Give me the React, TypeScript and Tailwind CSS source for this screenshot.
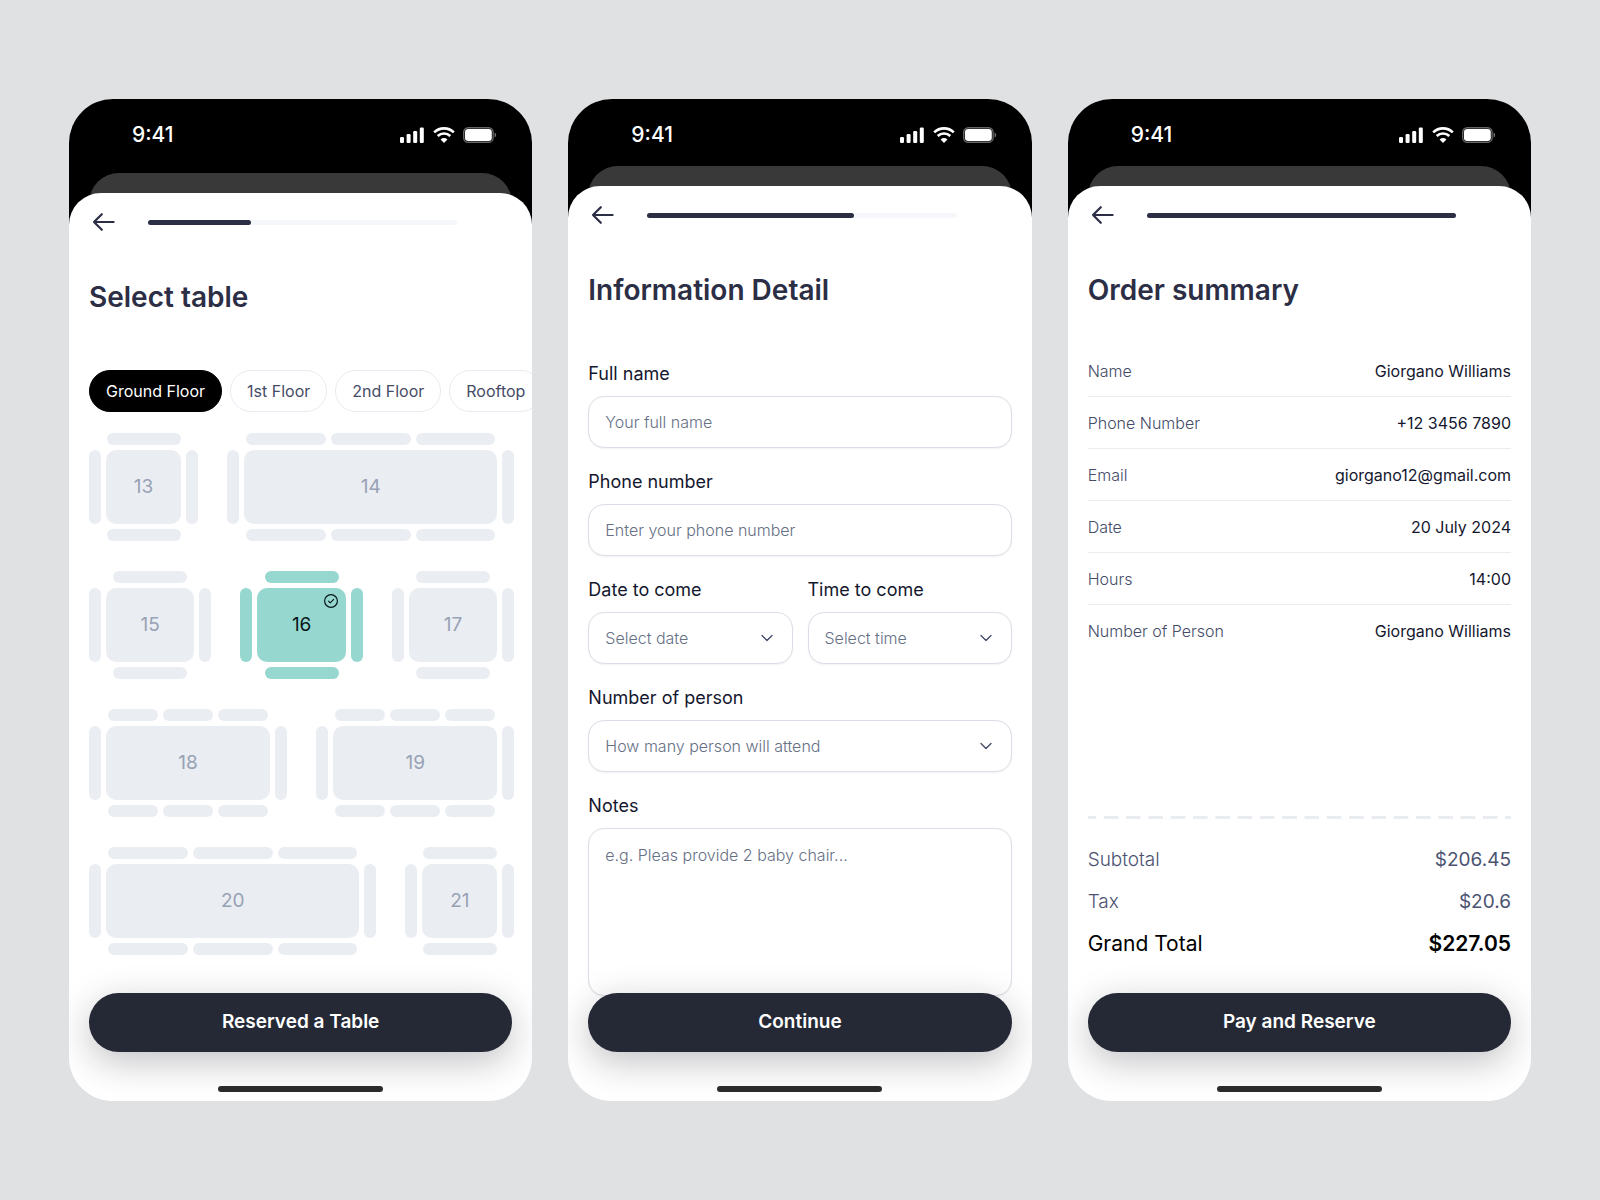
import { useState } from 'react';
import type { ReactNode } from 'react';
import { ChevronDown } from 'lucide-react';
import clsx from 'clsx';

type TableItem = {
  id: number;
  seats: 1 | 3;
  compact?: boolean;
};

const FLOORS = ['Ground Floor', '1st Floor', '2nd Floor', 'Rooftop'];

const TABLE_ROWS: TableItem[][] = [
  [
    { id: 13, seats: 1, compact: true },
    { id: 14, seats: 3 },
  ],
  [
    { id: 15, seats: 1 },
    { id: 16, seats: 1 },
    { id: 17, seats: 1 },
  ],
  [
    { id: 18, seats: 3 },
    { id: 19, seats: 3 },
  ],
  [
    { id: 20, seats: 3 },
    { id: 21, seats: 1, compact: true },
  ],
];

const SUMMARY = [
  { label: 'Name', value: 'Giorgano Williams' },
  { label: 'Phone Number', value: '+12 3456 7890' },
  { label: 'Email', value: 'giorgano12@gmail.com' },
  { label: 'Date', value: '20 July 2024' },
  { label: 'Hours', value: '14:00' },
  { label: 'Number of Person', value: 'Giorgano Williams' },
];

function StatusBar() {
  return (
    <div className="flex h-[67px] items-center justify-between pt-1 pr-[35px] pl-[63px] text-white">
      <span className="text-[21px] leading-7 font-medium">9:41</span>
      <div className="flex items-center gap-2">
        <svg width="25" height="16" viewBox="0 0 25 16" fill="currentColor" aria-hidden="true">
          <rect x="0" y="10" width="4" height="6" rx="1.2" />
          <rect x="6.6" y="7" width="4" height="9" rx="1.2" />
          <rect x="13.2" y="4" width="4" height="12" rx="1.2" />
          <rect x="19.8" y="0.5" width="4" height="15.5" rx="1.2" />
        </svg>
        <svg width="22" height="16" viewBox="0 0 22 16" fill="none" stroke="currentColor" aria-hidden="true">
          <path d="M1.2 5.4a14 14 0 0 1 19.6 0" strokeWidth="2.7" />
          <path d="M4.7 9a9 9 0 0 1 12.6 0" strokeWidth="2.6" />
          <path d="M11 15.9 7.6 12.4a4.9 4.9 0 0 1 6.8 0Z" fill="currentColor" stroke="none" />
        </svg>
        <svg width="34" height="16" viewBox="0 0 34 16" aria-hidden="true">
          <rect x="0.7" y="0.7" width="29.4" height="14.6" rx="4.6" fill="none" stroke="#fff" strokeOpacity="0.4" strokeWidth="1.4" />
          <rect x="2" y="2" width="26.8" height="12" rx="3.2" fill="#fff" />
          <path d="M31.6 5.4v5.2a2.9 2.9 0 0 0 0-5.2Z" fill="#fff" fillOpacity="0.45" />
        </svg>
      </div>
    </div>
  );
}

type PhoneProps = {
  title: string;
  step: number;
  action: string;
  lowered?: boolean;
  children: ReactNode;
};

function Phone({ title, step, action, lowered, children }: PhoneProps) {
  return (
    <section className="flex min-w-0 flex-1 flex-col overflow-hidden rounded-[44px] bg-white">
      <div className="bg-black">
        <StatusBar />
        <div className={clsx('px-5', lowered && 'pt-[7px]')}>
          <div className="h-[52px] rounded-t-[30px] bg-[#393939]" />
        </div>
      </div>

      <div className="relative -mt-8 flex flex-1 flex-col rounded-t-[32px] bg-white">
        <div className="flex h-[58px] items-center px-5">
          <button type="button" aria-label="Back" className="flex w-7 justify-center text-[#2b2e45]">
            <svg
              width="24"
              height="20"
              viewBox="0 0 24 20"
              fill="none"
              stroke="currentColor"
              strokeWidth="2.2"
              strokeLinecap="round"
              strokeLinejoin="round"
              aria-hidden="true"
            >
              <path d="M22.6 10H3M10.8 2.2 3 10l7.8 7.8" />
            </svg>
          </button>
          <div
            role="progressbar"
            aria-label="Reservation progress"
            aria-valuemin={0}
            aria-valuemax={3}
            aria-valuenow={step}
            className="mr-[55px] ml-[31px] h-[5px] flex-1 rounded-full bg-[#f6f7fa]"
          >
            <div className="h-full rounded-full bg-[#2b2e45]" style={{ width: `${(step / 3) * 100}%` }} />
          </div>
        </div>

        <h2 className="mt-[26px] px-5 text-[28px] leading-10 font-semibold text-[#2b2e45]">{title}</h2>

        <div className="flex flex-1 flex-col">{children}</div>

        <div className="relative flex flex-col items-center px-5 pb-[9px]">
          <button
            type="button"
            className="h-[59px] w-full rounded-full bg-[#252936] text-[19px] font-semibold text-white shadow-[0_10px_36px_rgba(20,20,30,0.26)]"
          >
            {action}
          </button>
          <div className="mt-[34px] h-[6px] w-[165px] rounded-full bg-[#2b2b2b]" />
        </div>
      </div>
    </section>
  );
}

function Seats({ count, color }: { count: number; color: string }) {
  if (count === 1) {
    return <span className={clsx('col-start-2 h-3 w-[74px] justify-self-center rounded-full', color)} />;
  }
  return (
    <span className="col-start-2 flex gap-[5px] px-[2px]">
      {Array.from({ length: count }, (_, i) => (
        <span key={i} className={clsx('h-3 flex-1 rounded-full', color)} />
      ))}
    </span>
  );
}

function DiningTable({ table, selected, onSelect }: { table: TableItem; selected: boolean; onSelect: () => void }) {
  const color = selected ? 'bg-[#96d7cf]' : 'bg-[#eaedf2]';

  return (
    <button
      type="button"
      aria-pressed={selected}
      onClick={onSelect}
      className={clsx(
        'grid grid-cols-[12px_1fr_12px] gap-[5px]',
        table.compact ? 'w-[109px] flex-none' : 'min-w-0 flex-1',
      )}
    >
      <Seats count={table.seats} color={color} />
      <span className={clsx('col-start-1 rounded-full', color)} />
      <span
        className={clsx(
          'relative flex h-[74px] items-center justify-center rounded-[10px] text-[19px]',
          color,
          selected ? 'text-[#07171a]' : 'text-[#97a2b4]',
        )}
      >
        {table.id}
        {selected ? (
          <svg
            width="14"
            height="14"
            viewBox="0 0 14 14"
            fill="none"
            stroke="#07171a"
            strokeLinecap="round"
            strokeLinejoin="round"
            className="absolute top-[6px] right-2"
            aria-hidden="true"
          >
            <circle cx="7" cy="7" r="6.4" strokeWidth="1.2" />
            <path d="m4.4 7.2 1.8 1.7 3.5-3.5" strokeWidth="1.1" />
          </svg>
        ) : null}
      </span>
      <span className={clsx('rounded-full', color)} />
      <Seats count={table.seats} color={color} />
    </button>
  );
}

function SelectTable() {
  const [floor, setFloor] = useState(FLOORS[0]);
  const [selected, setSelected] = useState(16);

  return (
    <>
      <div className="mt-[53px] flex gap-2 overflow-hidden pl-5">
        {FLOORS.map((name) => (
          <button
            key={name}
            type="button"
            onClick={() => setFloor(name)}
            className={clsx(
              'h-[42px] flex-none rounded-full border px-4 text-[16px] whitespace-nowrap',
              name === floor ? 'border-black bg-black text-white' : 'border-[#e8ebf1] bg-white text-[#454c68]',
            )}
          >
            {name}
          </button>
        ))}
      </div>

      <div className="mt-[21px] mb-[38px] flex flex-col gap-[30px] pr-[18px] pl-5">
        {TABLE_ROWS.map((row) => (
          <div key={row[0].id} className="flex gap-[29px]">
            {row.map((table) => (
              <DiningTable
                key={table.id}
                table={table}
                selected={table.id === selected}
                onSelect={() => setSelected(table.id)}
              />
            ))}
          </div>
        ))}
      </div>
    </>
  );
}

const labelClass = 'text-[18px] leading-7 text-[#14172e]';
const fieldClass =
  'w-full rounded-2xl border border-[#dcdde6] bg-white px-4 text-[16px] font-light text-[#667085] shadow-xs placeholder:text-[#667085]';

function TextField({ id, label, placeholder }: { id: string; label: string; placeholder: string }) {
  return (
    <div className="flex flex-col gap-2">
      <label htmlFor={id} className={labelClass}>
        {label}
      </label>
      <input id={id} type="text" placeholder={placeholder} className={clsx(fieldClass, 'h-[52px]')} />
    </div>
  );
}

function SelectField({ id, label, placeholder }: { id: string; label: string; placeholder: string }) {
  return (
    <div className="flex min-w-0 flex-1 flex-col gap-2">
      <label htmlFor={id} className={labelClass}>
        {label}
      </label>
      <div className="relative">
        <select id={id} className={clsx(fieldClass, 'h-[52px] appearance-none')}>
          <option>{placeholder}</option>
        </select>
        <ChevronDown
          size={20}
          strokeWidth={1.6}
          className="pointer-events-none absolute top-4 right-4 text-[#454c68]"
        />
      </div>
    </div>
  );
}

function InformationDetail() {
  return (
    <form className="mt-[50px] -mb-1 flex flex-col gap-5 px-5">
      <TextField id="full-name" label="Full name" placeholder="Your full name" />
      <TextField id="phone" label="Phone number" placeholder="Enter your phone number" />
      <div className="flex gap-[15px]">
        <SelectField id="date" label="Date to come" placeholder="Select date" />
        <SelectField id="time" label="Time to come" placeholder="Select time" />
      </div>
      <div className="flex">
        <SelectField id="person" label="Number of person" placeholder="How many person will attend" />
      </div>
      <div className="flex flex-col gap-2">
        <label htmlFor="notes" className={labelClass}>
          Notes
        </label>
        <textarea
          id="notes"
          placeholder="e.g. Pleas provide 2 baby chair..."
          className={clsx(fieldClass, 'h-[168px] resize-none py-3.5')}
        />
      </div>
    </form>
  );
}

function OrderSummary() {
  return (
    <>
      <dl className="mt-[35px] divide-y divide-[#eaecf1] px-5">
        {SUMMARY.map((row) => (
          <div key={row.label} className="flex h-[52px] items-center justify-between text-[16px]">
            <dt className="font-light text-[#454c68]">{row.label}</dt>
            <dd className="text-[#14172e]">{row.value}</dd>
          </div>
        ))}
      </dl>

      <div className="mt-auto mb-7 px-5">
        <svg width="100%" height="3" className="block" aria-hidden="true">
          <line x1="0" y1="1.5" x2="100%" y2="1.5" stroke="#e9ecf1" strokeWidth="3" strokeDasharray="14.6 7.7" strokeDashoffset="6.5" />
        </svg>
        <dl className="mt-5 text-[19px] text-[#4b5371]">
          <div className="flex h-[42px] items-center justify-between">
            <dt className="font-light">Subtotal</dt>
            <dd>$206.45</dd>
          </div>
          <div className="flex h-[42px] items-center justify-between">
            <dt className="font-light">Tax</dt>
            <dd>$20.6</dd>
          </div>
          <div className="flex h-[42px] items-center justify-between text-[21px] text-black">
            <dt>Grand Total</dt>
            <dd className="font-semibold">$227.05</dd>
          </div>
        </dl>
      </div>
    </>
  );
}

export default function App() {
  return (
    <main className="flex min-h-screen items-center bg-[#dfe1e2] px-[69px] font-['Inter',sans-serif]">
      <div className="flex w-full gap-9">
        <Phone title="Select table" step={1} action="Reserved a Table" lowered>
          <SelectTable />
        </Phone>
        <Phone title="Information Detail" step={2} action="Continue">
          <InformationDetail />
        </Phone>
        <Phone title="Order summary" step={3} action="Pay and Reserve">
          <OrderSummary />
        </Phone>
      </div>
    </main>
  );
}
